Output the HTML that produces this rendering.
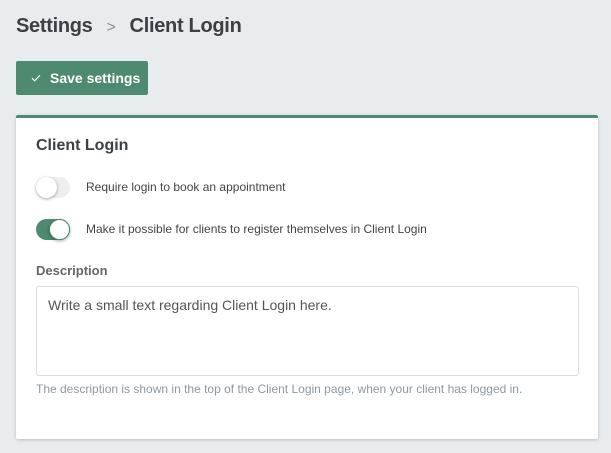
<!DOCTYPE html>
<html><head><style>
body{margin:0;width:611px;height:453px;background:#e9ecef;font-family:"Liberation Sans",sans-serif;position:relative;overflow:hidden}
.a{position:absolute}
h1{position:absolute;left:16px;top:15px;margin:0;font-size:20px;font-weight:bold;color:#3b4045;letter-spacing:-0.3px}
h1 span{color:#8a9096;font-weight:normal;font-size:16px;margin:0 14px 0 14px}
.btn{left:16px;top:61px;width:132px;height:34px;background:#4d8a6f;border-radius:2px;color:#fff;font-size:14px;font-weight:bold;line-height:34px;box-sizing:border-box;padding-left:34px}
.card{left:16px;top:115px;width:582px;height:324px;background:#fff;border-top:3px solid #4d8a6f;box-sizing:border-box;border-radius:2px;box-shadow:0 1px 3px rgba(0,0,0,.2)}
.tg{width:34px;height:21px;border-radius:11px}
.knob{position:absolute;top:0;width:21px;height:21px;border-radius:50%;background:#fff;box-shadow:0 1px 3px rgba(0,0,0,.35);box-sizing:border-box}
.lbl{font-size:12px;color:#444}
</style></head><body>
<h1>Settings<span>&gt;</span>Client Login</h1>
<div class="a btn">Save settings</div>
<svg class="a" style="left:31px;top:74px" width="10" height="8" viewBox="0 0 10 8"><path d="M1 4.2L3.6 6.8L9 1.2" fill="none" stroke="#fff" stroke-width="1.1"/></svg>
<div class="a card"></div>
<div class="a" style="left:36px;top:137px;font-size:16px;font-weight:bold;color:#3b4045">Client Login</div>
<div class="a tg" style="left:36px;top:177px;background:#eee"><div class="knob" style="left:0"></div></div>
<div class="a lbl" style="left:86px;top:180px">Require login to book an appointment</div>
<div class="a tg" style="left:36px;top:219px;background:#4d8a6f"><div class="knob" style="left:13px;border:1px solid #4d8a6f"></div></div>
<div class="a lbl" style="left:86px;top:222px">Make it possible for clients to register themselves in Client Login</div>
<div class="a" style="left:36px;top:263px;font-size:13px;font-weight:bold;color:#666">Description</div>
<div class="a" style="left:36px;top:286px;width:543px;height:90px;border:1px solid #ddd;border-radius:3px;box-sizing:border-box;padding:10px 11px;font-size:14px;color:#555">Write a small text regarding Client Login here.</div>
<div class="a" style="left:36px;top:382px;font-size:12px;color:#8b99a3">The description is shown in the top of the Client Login page, when your client has logged in.</div>
</body></html>
